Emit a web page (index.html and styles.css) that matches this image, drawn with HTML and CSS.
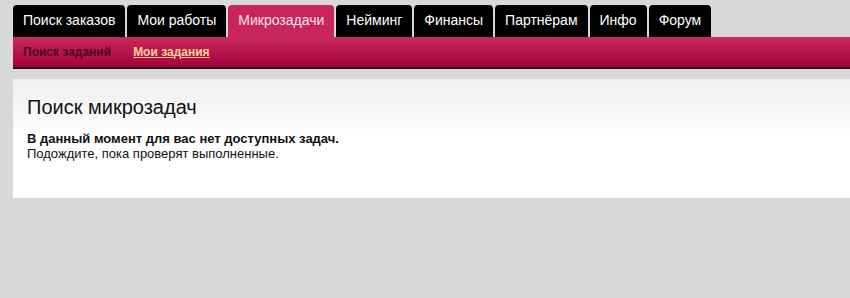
FILE: index.html
```html
<!DOCTYPE html>
<html lang="ru">
<head>
  <meta charset="UTF-8">
  <title>Поиск микрозадач</title>
  <link rel="stylesheet" href="styles.css">
</head>
<body>
  <div class="page">
    <ul class="tabs">
      <li><a href="#">Поиск заказов</a></li>
      <li><a href="#">Мои работы</a></li>
      <li class="active"><a href="#">Микрозадачи</a></li>
      <li><a href="#">Нейминг</a></li>
      <li><a href="#">Финансы</a></li>
      <li><a href="#">Партнёрам</a></li>
      <li><a href="#">Инфо</a></li>
      <li><a href="#">Форум</a></li>
    </ul>
    <div class="subnav">
      <span class="current">Поиск заданий</span>
      <a href="#">Мои задания</a>
    </div>

    <div class="content">
      <h1>Поиск микрозадач</h1>
      <p><b>В данный момент для вас нет доступных задач.</b><br>
      Подождите, пока проверят выполненные.</p>
    </div>
  </div>
</body>
</html>
```

FILE: styles.css
```css
body {
  margin: 0;
  background: #d8d8d8;
  font-family: "Liberation Sans", Arial, sans-serif;
  color: #111;
}
.page {
  margin-left: 13px;
  padding-top: 5px;
}
.tabs {
  display: flex;
  gap: 2px;
  margin: 0;
  padding: 0;
  list-style: none;
}
.tabs a {
  display: block;
  height: 32px;
  line-height: 31px;
  padding: 0 10px 0 10px;
  background: #000;
  color: #fff;
  font-size: 14px;
  text-decoration: none;
  border-radius: 4px 4px 0 0;
}
.tabs .active a {
  background: #c9255b;
  color: #fde4ee;
}
.subnav {
  height: 30px;
  display: flex;
  align-items: center;
  gap: 22px;
  padding-left: 10px;
  background: linear-gradient(#cb2a5d, #a3003a);
  border-bottom: 2px solid #2e0712;
  font-size: 12px;
  font-weight: bold;
}
.subnav .current {
  color: #4d0a1e;
}
.subnav a {
  color: #ffd29c;
}
.content {
  margin-top: 10px;
  height: 119px;
  box-sizing: border-box;
  padding: 17px 14px;
  background: linear-gradient(#eeeeee, #ffffff 60px);
}
.content h1 {
  margin: 0;
  font-size: 20px;
  font-weight: normal;
  line-height: 23px;
}
.content p {
  margin: 12px 0 0;
  font-size: 13px;
  line-height: 15px;
}
```
